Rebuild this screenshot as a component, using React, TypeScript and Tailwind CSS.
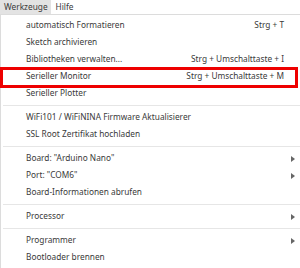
type Entry =
  | { kind: "item"; label: string; shortcut?: string; submenu?: boolean; marked?: boolean }
  | { kind: "sep" };

const entries: Entry[] = [
  { kind: "item", label: "automatisch Formatieren", shortcut: "Strg + T" },
  { kind: "item", label: "Sketch archivieren" },
  { kind: "item", label: "Bibliotheken verwalten...", shortcut: "Strg + Umschalttaste + I" },
  { kind: "item", label: "Serieller Monitor", shortcut: "Strg + Umschalttaste + M", marked: true },
  { kind: "item", label: "Serieller Plotter" },
  { kind: "sep" },
  { kind: "item", label: "WiFi101 / WiFiNINA Firmware Aktualisierer" },
  { kind: "item", label: "SSL Root Zertifikat hochladen" },
  { kind: "sep" },
  { kind: "item", label: 'Board: "Arduino Nano"', submenu: true },
  { kind: "item", label: 'Port: "COM6"', submenu: true },
  { kind: "item", label: "Board-Informationen abrufen" },
  { kind: "sep" },
  { kind: "item", label: "Processor", submenu: true },
  { kind: "sep" },
  { kind: "item", label: "Programmer", submenu: true },
  { kind: "item", label: "Bootloader brennen" },
];

export default function App() {
  return (
    <div className="h-[268px] w-[300px] overflow-hidden bg-white font-['Noto_Sans',sans-serif] text-[8.3px] text-[#3a3a3a]">
      <div className="flex h-[14px] items-stretch">
        <span className="flex items-center bg-[#e3e3e3] pl-[4px] pr-[3px]">Werkzeuge</span>
        <span className="flex items-center px-[5px]">Hilfe</span>
      </div>

      <div className="h-full border-l border-t border-[#dcdcdc] pt-[2px]">
        {entries.map((entry, i) =>
          entry.kind === "sep" ? (
            <div key={i} className="flex h-[7px] items-center pl-[2px]">
              <div className="h-px w-full bg-[#e6e6e6]" />
            </div>
          ) : (
            <div key={i} className="relative flex h-[17px] items-center pl-[25px] pr-[5px]">
              <span className="flex-1 whitespace-nowrap">{entry.label}</span>
              {entry.shortcut && <span className="whitespace-nowrap">{entry.shortcut}</span>}
              <span className="flex w-[11px] justify-end">
                {entry.submenu && (
                  <svg width="4" height="6" viewBox="0 0 4 6">
                    <path d="M0 0 L4 3 L0 6 Z" fill="#666" />
                  </svg>
                )}
              </span>
              {entry.marked && (
                <div className="absolute left-[-1px] right-[2px] top-[-1px] bottom-[-3px] border-[3px] border-[#ee0000]" />
              )}
            </div>
          )
        )}
      </div>
    </div>
  );
}
